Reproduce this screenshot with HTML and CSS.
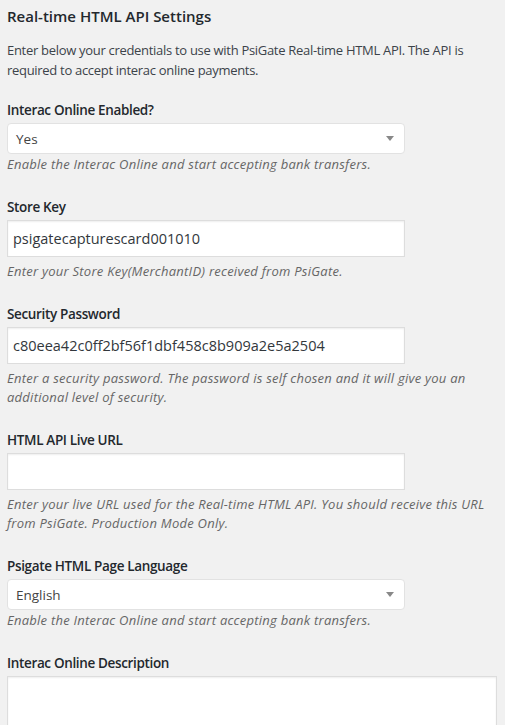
FILE: index.html
```html
<!DOCTYPE html>
<html lang="en">
<head>
    <meta charset="UTF-8">
    <meta name="viewport" content="width=device-width, initial-scale=1.0">
    <title>Real-time HTML API Settings</title>
    <link rel="stylesheet" href="styles.css">
</head>
<body>
    <div class="settings">
        <h2 class="settings-title">Real-time HTML API Settings</h2>
        <p class="intro">Enter below your credentials to use with PsiGate Real-time HTML API. The API is required to accept interac online payments.</p>

        <div class="field">
            <label class="field-label">Interac Online Enabled?</label>
            <div class="select"><span>Yes</span><span class="caret"></span></div>
            <p class="description tight">Enable the Interac Online and start accepting bank transfers.</p>
        </div>

        <div class="field">
            <label class="field-label" for="store-key">Store Key</label>
            <input class="text-input" id="store-key" type="text" value="psigatecapturescard001010">
            <p class="description">Enter your Store Key(MerchantID) received from PsiGate.</p>
        </div>

        <div class="field">
            <label class="field-label" for="security-password">Security Password</label>
            <input class="text-input" id="security-password" type="text" value="c80eea42c0ff2bf56f1dbf458c8b909a2e5a2504">
            <p class="description">Enter a security password. The password is self chosen and it will give you an additional level of security.</p>
        </div>

        <div class="field">
            <label class="field-label" for="live-url">HTML API Live URL</label>
            <input class="text-input" id="live-url" type="text" value="">
            <p class="description">Enter your live URL used for the Real-time HTML API. You should receive this URL from PsiGate. Production Mode Only.</p>
        </div>

        <div class="field">
            <label class="field-label">Psigate HTML Page Language</label>
            <div class="select"><span>English</span><span class="caret"></span></div>
            <p class="description tight">Enable the Interac Online and start accepting bank transfers.</p>
        </div>

        <div class="field">
            <label class="field-label" for="description">Interac Online Description</label>
            <textarea class="textarea" id="description"></textarea>
        </div>
    </div>
</body>
</html>
```

FILE: styles.css
```css
body {
    margin: 0;
    background-color: #f1f1f1;
    color: #23282d;
    font-family: "Open Sans", "Noto Sans", sans-serif;
    font-size: 13px;
}
.settings {
    padding: 5px 0 0 7px;
}
.settings-title {
    font-size: 15px;
    font-weight: 600;
    line-height: 22px;
    margin: 0 0 14px 0;
}
.intro {
    color: #3c434a;
    letter-spacing: -0.3px;
    line-height: 19.5px;
    margin: 0 8px 20px 0;
}
.field {
    margin-bottom: 23px;
}
.field-label {
    display: block;
    font-size: 13.5px;
    font-weight: 600;
    letter-spacing: -0.35px;
    line-height: 20px;
    margin-bottom: 3px;
}
.select {
    display: flex;
    justify-content: space-between;
    align-items: center;
    box-sizing: border-box;
    width: 398px;
    height: 31px;
    padding: 0 8px 0 8px;
    background-color: #fff;
    border: 1px solid #e2e2e2;
    border-radius: 4px;
    color: #444;
    font-size: 13.5px;
}
.caret {
    width: 0;
    height: 0;
    margin-right: 2px;
    border-left: 4px solid transparent;
    border-right: 4px solid transparent;
    border-top: 5px solid #888;
}
.text-input {
    display: block;
    box-sizing: border-box;
    width: 398px;
    height: 37px;
    margin: 0;
    padding: 0 5px;
    background-color: #fff;
    border: 1px solid #ddd;
    box-shadow: inset 0 1px 2px rgba(0, 0, 0, 0.07);
    color: #32373c;
    font-family: "Open Sans", "Noto Sans", sans-serif;
    font-size: 14.5px;
    outline: none;
}
.description {
    color: #666;
    font-style: italic;
    letter-spacing: 0.25px;
    line-height: 19px;
    margin: 5px 0 0 0;
}
.description.tight {
    margin-top: 1px;
}
.textarea {
    display: block;
    box-sizing: border-box;
    width: 490px;
    height: 90px;
    margin: 0;
    background-color: #fff;
    border: 1px solid #ddd;
    box-shadow: inset 0 1px 2px rgba(0, 0, 0, 0.07);
    resize: none;
}
```
